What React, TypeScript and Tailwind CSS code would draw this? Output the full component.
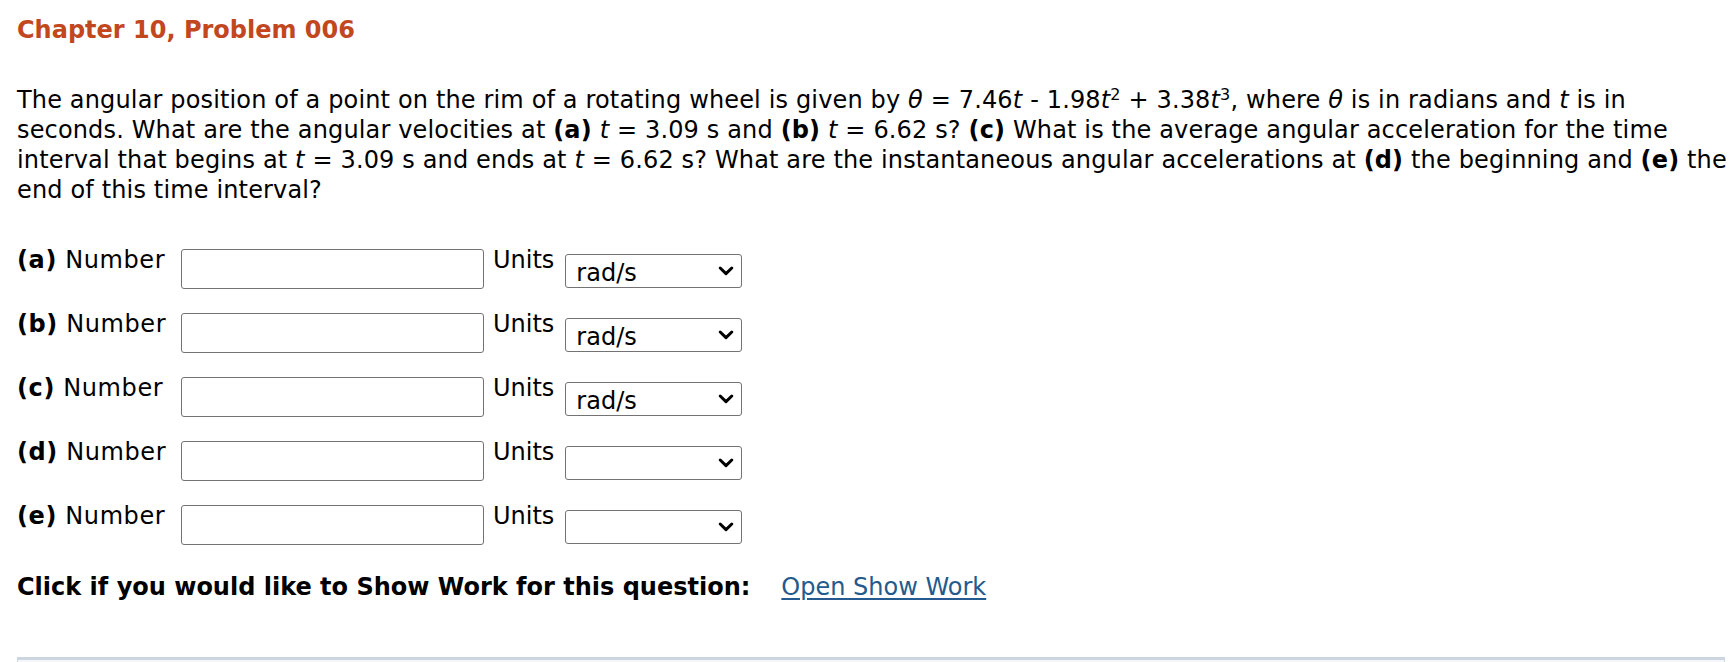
import React from "react";

const font = { fontFamily: '"DejaVu Sans", Verdana, sans-serif' };

function Chevron() {
  return (
    <svg width="16" height="12" viewBox="0 0 16 12" className="shrink-0">
      <path d="M2.2 3 L8 8.6 L13.8 3" fill="none" stroke="#000" strokeWidth="3" strokeLinecap="round" strokeLinejoin="round" />
    </svg>
  );
}

function Row({ letter, unit }: { letter: string; unit: string }) {
  return (
    <div className="flex items-start">
      <div className="w-[164px] shrink-0 whitespace-nowrap leading-[30px] tracking-[0.6px]">
        <span className="font-bold">({letter})</span> Number
      </div>
      <input
        type="text"
        className="mt-[4px] h-[40px] w-[303px] shrink-0 rounded-[3px] border border-[#737373] bg-white outline-none"
      />
      <div className="ml-[9px] leading-[30px]">Units</div>
      <div className="ml-[11px] mt-[9px] flex h-[34px] w-[177px] shrink-0 items-center justify-between rounded-[3px] border border-[#737373] bg-white pl-[10px] pr-[7px]">
        <span className="pt-[4px] leading-[30px]">{unit}</span>
        <Chevron />
      </div>
    </div>
  );
}

export default function App() {
  return (
    <div className="h-[662px] w-full overflow-hidden bg-white pl-[17px] pr-[9px] pt-[15px] text-[24px] text-black" style={font}>
      <h1 className="text-[24px] font-bold leading-[30px] text-[#c2471e]">Chapter 10, Problem 006</h1>
      <p className="mt-[40px] whitespace-nowrap leading-[30px] tracking-[0.15px]">
        The angular position of a point on the rim of a rotating wheel is given by <i>θ</i> = 7.46<i>t</i> - 1.98<i>t</i>
        <sup className="text-[16px]">2</sup> + 3.38<i>t</i>
        <sup className="text-[16px]">3</sup>, where <i>θ</i> is in radians and <i>t</i> is in
        <br />
        seconds. What are the angular velocities at <b>(a)</b> <i>t</i> = 3.09 s and <b>(b)</b> <i>t</i> = 6.62 s?{" "}
        <b>(c)</b> What is the average angular acceleration for the time
        <br />
        interval that begins at <i>t</i> = 3.09 s and ends at <i>t</i> = 6.62 s? What are the instantaneous angular
        accelerations at <b>(d)</b> the beginning and <b>(e)</b> the
        <br />
        end of this time interval?
      </p>
      <div className="mt-[40px] flex flex-col gap-[20px]">
        <Row letter="a" unit="rad/s" />
        <Row letter="b" unit="rad/s" />
        <Row letter="c" unit="rad/s" />
        <Row letter="d" unit="" />
        <Row letter="e" unit="" />
      </div>
      <div className="mt-[27px] flex items-center leading-[30px]">
        <span className="font-bold">Click if you would like to Show Work for this question:</span>
        <a href="#" className="ml-[31px] text-[#245a8d] underline underline-offset-[3px]">
          Open Show Work
        </a>
      </div>
      <div className="mt-[55px] h-[40px] w-full border-l border-r border-t-[3px] border-[#ccd5e0] bg-[#f5f7fa]" />
    </div>
  );
}
